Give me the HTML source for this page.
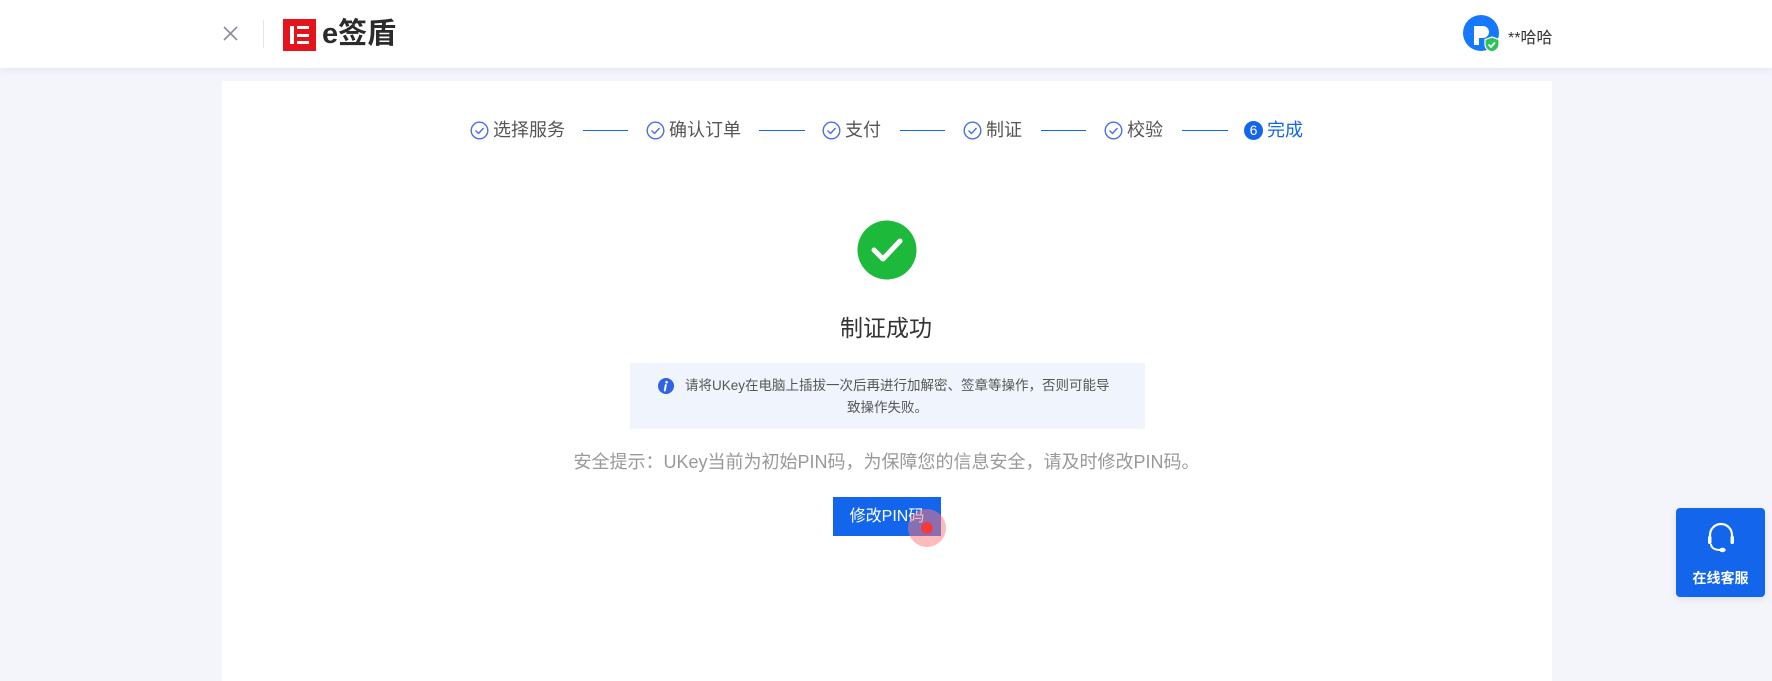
<!DOCTYPE html>
<html><head><meta charset="utf-8"><style>
*{margin:0;padding:0;box-sizing:border-box}
body{width:1772px;height:606px;overflow:hidden;background:#f4f5fa;font-family:"Liberation Sans","Noto Sans CJK SC",sans-serif;position:relative}
.hdr{position:absolute;left:0;top:0;width:1772px;height:68px;background:#fff;box-shadow:0 2px 8px rgba(30,60,160,0.08)}
.abs{position:absolute}
.card{position:absolute;left:222px;top:81px;width:1330px;height:600px;background:#fff}
.step{position:absolute;top:119px;font-size:18px;color:#555;display:flex;align-items:center;line-height:22px}
.step svg{margin-right:4px}
.line{position:absolute;top:130px;height:1px;background:#1366ec}
</style></head><body>
<div class="hdr">
 <svg class="abs" style="left:223px;top:26px" width="15" height="15" viewBox="0 0 15 15"><path d="M1 1L14 14M14 1L1 14" stroke="#8a8f99" stroke-width="1.6"/></svg>
 <div class="abs" style="left:263px;top:20px;width:1px;height:28px;background:#e5e5e5"></div>
 <div class="abs" style="left:283px;top:19px;width:33px;height:32px;background:#e3141b">
  <div class="abs" style="left:7px;top:7px;width:4px;height:18px;background:#fff"></div>
  <div class="abs" style="left:14px;top:7px;width:12px;height:3px;background:#fff"></div>
  <div class="abs" style="left:14px;top:14.5px;width:12px;height:3px;background:#fff"></div>
  <div class="abs" style="left:14px;top:22px;width:12px;height:3px;background:#fff"></div>
 </div>
 <div class="abs" style="left:322px;top:16px;font-size:29px;line-height:36px;color:#2b2b2b;font-weight:bold">e签盾</div>
 <svg class="abs" style="left:1463px;top:15px" width="40" height="40" viewBox="0 0 40 40">
  <circle cx="18" cy="18" r="18" fill="#1677ff"/>
  <path d="M11 30V11h9a6 6 0 0 1 0 12h-4v7z" fill="#fff"/>
  <path d="M29 22l7 2.5v5c0 4-3.5 6.5-7 7.5c-3.5-1-7-3.5-7-7.5v-5z" fill="#2fc25b" stroke="#fff" stroke-width="1.2"/>
  <path d="M25.5 29.5l2.5 2.5l4-4.5" stroke="#fff" stroke-width="1.8" fill="none"/>
 </svg>
 <div class="abs" style="left:1508px;top:24px;font-size:16px;color:#333">**哈哈</div>
</div>
<div class="card"></div>

<div class="step" style="left:470px"><svg width="19" height="19" viewBox="0 0 19 19"><circle cx="9.5" cy="9.5" r="8.3" fill="none" stroke="#4a6fe3" stroke-width="1.4"/><path d="M5.5 9.5l3 3l5-5.5" fill="none" stroke="#4a6fe3" stroke-width="1.4"/></svg>选择服务</div>
<div class="line" style="left:583px;width:45px"></div>
<div class="step" style="left:646px"><svg width="19" height="19" viewBox="0 0 19 19"><circle cx="9.5" cy="9.5" r="8.3" fill="none" stroke="#4a6fe3" stroke-width="1.4"/><path d="M5.5 9.5l3 3l5-5.5" fill="none" stroke="#4a6fe3" stroke-width="1.4"/></svg>确认订单</div>
<div class="line" style="left:759px;width:46px"></div>
<div class="step" style="left:822px"><svg width="19" height="19" viewBox="0 0 19 19"><circle cx="9.5" cy="9.5" r="8.3" fill="none" stroke="#4a6fe3" stroke-width="1.4"/><path d="M5.5 9.5l3 3l5-5.5" fill="none" stroke="#4a6fe3" stroke-width="1.4"/></svg>支付</div>
<div class="line" style="left:900px;width:45px"></div>
<div class="step" style="left:963px"><svg width="19" height="19" viewBox="0 0 19 19"><circle cx="9.5" cy="9.5" r="8.3" fill="none" stroke="#4a6fe3" stroke-width="1.4"/><path d="M5.5 9.5l3 3l5-5.5" fill="none" stroke="#4a6fe3" stroke-width="1.4"/></svg>制证</div>
<div class="line" style="left:1041px;width:45px"></div>
<div class="step" style="left:1104px"><svg width="19" height="19" viewBox="0 0 19 19"><circle cx="9.5" cy="9.5" r="8.3" fill="none" stroke="#4a6fe3" stroke-width="1.4"/><path d="M5.5 9.5l3 3l5-5.5" fill="none" stroke="#4a6fe3" stroke-width="1.4"/></svg>校验</div>
<div class="line" style="left:1182px;width:46px"></div>
<div class="step" style="left:1244px;color:#1366ec"><span style="display:inline-block;width:19px;height:19px;border-radius:50%;background:#1366ec;color:#fff;font-size:14px;line-height:19px;text-align:center;margin-right:4px">6</span>完成</div>

<svg class="abs" style="left:857px;top:220px" width="60" height="60" viewBox="0 0 60 60"><circle cx="30" cy="30" r="29.5" fill="#1cb93a"/><path d="M17 30l9 9l17-18" fill="none" stroke="#fff" stroke-width="5" stroke-linecap="round" stroke-linejoin="round"/></svg>
<div class="abs" style="left:0;width:1772px;top:309px;text-align:center;font-size:23px;color:#333">制证成功</div>

<div class="abs" style="left:630px;top:363px;width:515px;height:66px;background:#f0f5fd"></div>
<svg class="abs" style="left:658px;top:378px" width="16" height="16" viewBox="0 0 16 16"><circle cx="8" cy="8" r="8" fill="#2e63e8"/><circle cx="8.6" cy="4.2" r="1.3" fill="#fff"/><path d="M7.8 7L6.8 12.5" stroke="#fff" stroke-width="2" stroke-linecap="round"/></svg>
<div class="abs" style="left:685px;top:376px;font-size:13.5px;color:#555;line-height:20px">请将UKey在电脑上插拔一次后再进行加解密、签章等操作，否则可能导</div>
<div class="abs" style="left:0;width:1775px;top:398px;text-align:center;font-size:13.5px;color:#555;line-height:20px">致操作失败。</div>

<div class="abs" style="left:0;width:1773px;top:450px;text-align:center;font-size:18px;color:#999;line-height:24px">安全提示：UKey当前为初始PIN码，为保障您的信息安全，请及时修改PIN码。</div>

<div class="abs" style="left:833px;top:497px;width:108px;height:39px;background:#1366ec;color:#fff;font-size:16px;line-height:39px;text-align:center">修改PIN码</div>
<div class="abs" style="left:908px;top:509px;width:38px;height:38px;border-radius:50%;background:rgba(255,120,120,0.5)"></div>
<div class="abs" style="left:921px;top:522px;width:12px;height:12px;border-radius:50%;background:#f23c3c"></div>

<div class="abs" style="left:1676px;top:508px;width:89px;height:89px;background:#1366ec;border-radius:4px;box-shadow:0 2px 8px rgba(0,0,0,0.1)">
 <svg class="abs" style="left:31px;top:14px" width="28" height="32" viewBox="0 0 28 32"><path d="M3 18V13a11 11 0 0 1 22 0v5" fill="none" stroke="#fff" stroke-width="2.2"/><rect x="1" y="14" width="3.5" height="8" rx="1.5" fill="#fff"/><rect x="23.5" y="14" width="3.5" height="8" rx="1.5" fill="#fff"/><path d="M4 22c0 4 4 6 10 6" fill="none" stroke="#fff" stroke-width="2"/><ellipse cx="15.5" cy="28" rx="3.2" ry="2.2" fill="#fff"/></svg>
 <div class="abs" style="left:0;width:89px;top:60px;text-align:center;color:#fff;font-size:14px;font-weight:bold">在线客服</div>
</div>
</body></html>
